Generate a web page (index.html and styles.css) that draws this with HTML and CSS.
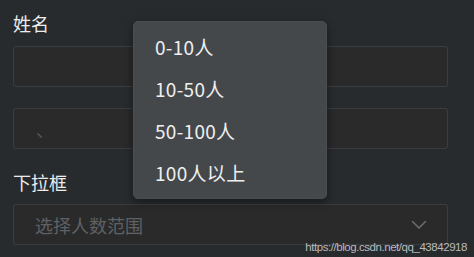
FILE: index.html
```html
<!DOCTYPE html>
<html lang="zh-CN">
<head>
<meta charset="utf-8">
<title>表单</title>
<link rel="stylesheet" href="styles.css">
</head>
<body>
<div class="page">
  <form class="form">
    <div class="label">姓名</div>
    <div class="input"></div>
    <div class="input input-second"><span class="ph ph-mark">、</span></div>
    <div class="label label-select">下拉框</div>
    <div class="input select">
      <span class="ph">选择人数范围</span>
      <svg class="chevron" width="16" height="10" viewBox="0 0 16 10"><polyline points="1.5,1.5 8,8 14.5,1.5" fill="none" stroke="#6b6e71" stroke-width="1.5" stroke-linecap="round" stroke-linejoin="round"/></svg>
    </div>
  </form>
  <ul class="menu">
    <li class="item">0-10人</li>
    <li class="item">10-50人</li>
    <li class="item">50-100人</li>
    <li class="item">100人以上</li>
  </ul>
  <div class="watermark">https://blog.csdn.net/qq_43842918</div>
</div>
</body>
</html>
```
FILE: styles.css
```css
html, body {
  margin: 0;
  padding: 0;
  background: #282b2e;
}
body {
  font-family: "Noto Sans CJK SC", "Noto Sans", sans-serif;
  color: #e8e9ea;
}
.page {
  position: relative;
  width: 474px;
  height: 257px;
  overflow: hidden;
}
.form {
  display: flex;
  flex-direction: column;
  margin: 0;
  padding: 8px 26px 0 13px;
}
.label {
  height: 30px;
  line-height: 30px;
  font-size: 18px;
  color: #eceded;
}
.label-select {
  margin-top: 18px;
}
.input {
  box-sizing: border-box;
  height: 41px;
  margin-top: 8px;
  border: 1px solid #3b3e41;
  border-radius: 3px;
  background: #2a2a2b;
  display: flex;
  align-items: center;
  padding: 0 20px 0 21px;
}
.input-second {
  margin-top: 21px;
}
.select {
  margin-top: 7px;
  justify-content: space-between;
}
.ph {
  font-size: 18px;
  color: #5e6164;
}
.ph-mark {
  color: #55585b;
  padding-left: 1px;
}
.chevron {
  display: block;
  margin-right: 0;
}
.menu {
  position: absolute;
  left: 133px;
  top: 21px;
  width: 194px;
  box-sizing: border-box;
  margin: 0;
  padding: 4px 0;
  list-style: none;
  background: #45484b;
  border: 1px solid #4b4e51;
  border-radius: 5px;
  box-shadow: 0 3px 10px rgba(0, 0, 0, 0.45);
}
.item {
  height: 42px;
  line-height: 42px;
  padding-left: 21px;
  font-size: 19px;
  letter-spacing: 0.3px;
  color: #eeeff0;
}
.watermark {
  position: absolute;
  right: 7px;
  bottom: 4px;
  font-family: "Liberation Sans", Arial, sans-serif;
  font-size: 11.5px;
  letter-spacing: -0.45px;
  color: rgba(215, 215, 215, 0.85);
}
```
